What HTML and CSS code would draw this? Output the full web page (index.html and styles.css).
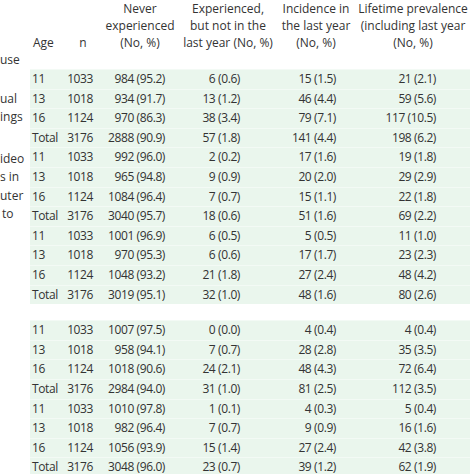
FILE: index.html
```html
<!DOCTYPE html>
<html>
<head>
<meta charset="utf-8">
<link rel="stylesheet" href="styles.css">
</head>
<body>
<table class="tbl">
  <colgroup>
    <col class="c-label"><col class="c-age"><col class="c-n"><col class="c-never"><col class="c-exp"><col class="c-inc"><col class="c-life">
  </colgroup>
  <thead>
    <tr class="head">
      <th class="lbl"></th>
      <th class="age">Age</th>
      <th>n</th>
      <th>Never<br>experienced<br>(No, %)</th>
      <th>Experienced,<br>but not in the<br>last year (No, %)</th>
      <th>Incidence in<br>the last year<br>(No, %)</th>
      <th>Lifetime prevalence<br>(including last year<br>(No, %)</th>
    </tr>
  </thead>
  <tbody>
    <tr class="sec"><td class="lbl">use</td><td colspan="6"></td></tr>

    <tr><td class="lbl" rowspan="4"><div class="lines"><div>ual</div><div>ings</div></div></td><td class="age">11</td><td class="n">1033</td><td class="never">984 (95.2)</td><td class="exp">6 (0.6)</td><td class="inc">15 (1.5)</td><td class="life">21 (2.1)</td></tr>
    <tr><td class="age">13</td><td class="n">1018</td><td class="never">934 (91.7)</td><td class="exp">13 (1.2)</td><td class="inc">46 (4.4)</td><td class="life">59 (5.6)</td></tr>
    <tr><td class="age">16</td><td class="n">1124</td><td class="never">970 (86.3)</td><td class="exp">38 (3.4)</td><td class="inc">79 (7.1)</td><td class="life">117 (10.5)</td></tr>
    <tr><td class="age">Total</td><td class="n">3176</td><td class="never">2888 (90.9)</td><td class="exp">57 (1.8)</td><td class="inc">141 (4.4)</td><td class="life">198 (6.2)</td></tr>

    <tr><td class="lbl" rowspan="4"><div class="lines"><div>ideo</div><div>s in</div><div>uter</div><div class="ind">to</div></div></td><td class="age">11</td><td class="n">1033</td><td class="never">992 (96.0)</td><td class="exp">2 (0.2)</td><td class="inc">17 (1.6)</td><td class="life">19 (1.8)</td></tr>
    <tr><td class="age">13</td><td class="n">1018</td><td class="never">965 (94.8)</td><td class="exp">9 (0.9)</td><td class="inc">20 (2.0)</td><td class="life">29 (2.9)</td></tr>
    <tr><td class="age">16</td><td class="n">1124</td><td class="never">1084 (96.4)</td><td class="exp">7 (0.7)</td><td class="inc">15 (1.1)</td><td class="life">22 (1.8)</td></tr>
    <tr><td class="age">Total</td><td class="n">3176</td><td class="never">3040 (95.7)</td><td class="exp">18 (0.6)</td><td class="inc">51 (1.6)</td><td class="life">69 (2.2)</td></tr>

    <tr><td class="lbl" rowspan="4"></td><td class="age">11</td><td class="n">1033</td><td class="never">1001 (96.9)</td><td class="exp">6 (0.5)</td><td class="inc">5 (0.5)</td><td class="life">11 (1.0)</td></tr>
    <tr><td class="age">13</td><td class="n">1018</td><td class="never">970 (95.3)</td><td class="exp">6 (0.6)</td><td class="inc">17 (1.7)</td><td class="life">23 (2.3)</td></tr>
    <tr><td class="age">16</td><td class="n">1124</td><td class="never">1048 (93.2)</td><td class="exp">21 (1.8)</td><td class="inc">27 (2.4)</td><td class="life">48 (4.2)</td></tr>
    <tr><td class="age">Total</td><td class="n">3176</td><td class="never">3019 (95.1)</td><td class="exp">32 (1.0)</td><td class="inc">48 (1.6)</td><td class="life">80 (2.6)</td></tr>

    <tr class="blank"><td class="lbl"></td><td colspan="6"></td></tr>

    <tr><td class="lbl" rowspan="4"></td><td class="age">11</td><td class="n">1033</td><td class="never">1007 (97.5)</td><td class="exp">0 (0.0)</td><td class="inc">4 (0.4)</td><td class="life">4 (0.4)</td></tr>
    <tr><td class="age">13</td><td class="n">1018</td><td class="never">958 (94.1)</td><td class="exp">7 (0.7)</td><td class="inc">28 (2.8)</td><td class="life">35 (3.5)</td></tr>
    <tr><td class="age">16</td><td class="n">1124</td><td class="never">1018 (90.6)</td><td class="exp">24 (2.1)</td><td class="inc">48 (4.3)</td><td class="life">72 (6.4)</td></tr>
    <tr><td class="age">Total</td><td class="n">3176</td><td class="never">2984 (94.0)</td><td class="exp">31 (1.0)</td><td class="inc">81 (2.5)</td><td class="life">112 (3.5)</td></tr>

    <tr><td class="lbl" rowspan="4"></td><td class="age">11</td><td class="n">1033</td><td class="never">1010 (97.8)</td><td class="exp">1 (0.1)</td><td class="inc">4 (0.3)</td><td class="life">5 (0.4)</td></tr>
    <tr><td class="age">13</td><td class="n">1018</td><td class="never">982 (96.4)</td><td class="exp">7 (0.7)</td><td class="inc">9 (0.9)</td><td class="life">16 (1.6)</td></tr>
    <tr><td class="age">16</td><td class="n">1124</td><td class="never">1056 (93.9)</td><td class="exp">15 (1.4)</td><td class="inc">27 (2.4)</td><td class="life">42 (3.8)</td></tr>
    <tr><td class="age">Total</td><td class="n">3176</td><td class="never">3048 (96.0)</td><td class="exp">23 (0.7)</td><td class="inc">39 (1.2)</td><td class="life">62 (1.9)</td></tr>
  </tbody>
</table>
</body>
</html>
```

FILE: styles.css
```css
html, body {
  margin: 0;
  padding: 0;
  background: #ffffff;
  overflow: hidden;
}
body {
  font-family: "Open Sans", "Noto Sans", sans-serif;
  font-size: 12px;
  color: #333333;
}
.tbl {
  table-layout: fixed;
  width: 470px;
  border-collapse: collapse;
  border-spacing: 0;
}
.c-label { width: 30px; }
.c-age { width: 36px; }
.c-n { width: 34px; }
.c-never { width: 80px; }
.c-exp { width: 96px; }
.c-inc { width: 80px; }
.c-life { width: 114px; }

th, td {
  padding: 0;
  white-space: nowrap;
}
.head th {
  font-weight: normal;
  line-height: 17px;
  height: 51px;
  vertical-align: bottom;
  text-align: center;
}
.head th.age {
  text-align: left;
  padding-left: 3px;
}
.sec td {
  height: 18px;
  line-height: 18px;
  vertical-align: middle;
}
.blank td {
  height: 16px;
}
tbody tr td {
  height: 19.6px;
  line-height: 19.6px;
  letter-spacing: -0.4px;
}
tbody td.lbl {
  letter-spacing: 0;
  overflow: hidden;
  vertical-align: middle;
  text-align: left;
}
tbody tr:not(.sec):not(.blank) td:not(.lbl) {
  background: #eaf6ed;
  box-shadow: inset 0 1px 0 #f3faf5;
}
.lines {
  line-height: 18.5px;
}
.lines div { white-space: nowrap; }
.ind { margin-left: 2px; }
td.age {
  text-align: left;
  padding-left: 2px;
}
td.n { text-align: right; padding-right: 7px; }
td.never { text-align: right; padding-right: 15px; }
td.exp { text-align: right; padding-right: 36px; }
td.inc { text-align: right; padding-right: 20px; }
td.life { text-align: right; padding-right: 34px; }
```
